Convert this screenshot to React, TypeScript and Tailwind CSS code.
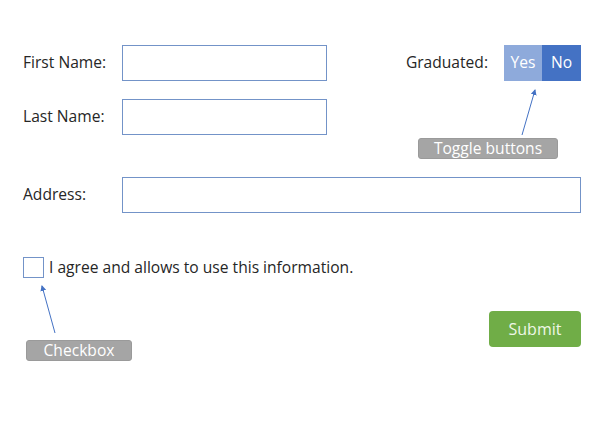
import React from 'react'

const FONT = { fontFamily: '"Open Sans", "Noto Sans", sans-serif' }

function Field({ label, wide }: { label: string; wide?: boolean }) {
  return (
    <div className={wide ? 'flex flex-1 items-center' : 'flex items-center'}>
      <label className="w-[99px] text-[15.6px] text-[#262626]">{label}</label>
      <input
        className={
          (wide ? 'flex-1 ' : 'w-[205px] ') +
          'h-[36px] border border-[#7393c8] bg-white outline-none'
        }
      />
    </div>
  )
}

function Callout({ text, className }: { text: string; className: string }) {
  return (
    <div
      className={
        'absolute flex h-[21px] items-center justify-center rounded-[3px] border border-[#9a9a9a] bg-[#a5a5a5] text-[15.6px] text-white ' +
        className
      }
    >
      {text}
    </div>
  )
}

export default function App() {
  return (
    <div className="relative h-[435px] w-[613px] bg-white pl-[23px] pr-[32px]" style={FONT}>
      <div className="pt-[45px]">
        <div className="flex items-center">
          <Field label="First Name:" />
          <div className="ml-auto flex items-center">
            <span className="mr-[16px] text-[15.6px] text-[#262626]">Graduated:</span>
            <div className="flex h-[36px]">
              <button className="w-[38px] bg-[#8eaadb] text-[15.6px] text-white">Yes</button>
              <button className="w-[39px] bg-[#4472c4] text-[15.6px] text-white">No</button>
            </div>
          </div>
        </div>
        <div className="mt-[18px] flex">
          <Field label="Last Name:" />
        </div>
        <div className="mt-[42px] flex">
          <Field label="Address:" wide />
        </div>
        <div className="mt-[43px] flex items-center">
          <input
            type="checkbox"
            className="h-[21px] w-[21px] appearance-none border border-[#7393c8] bg-white"
          />
          <span className="ml-[5px] text-[15.6px] text-[#262626]">
            I agree and allows to use this information.
          </span>
        </div>
        <div className="mt-[32px] flex justify-end">
          <button className="h-[36px] w-[92px] rounded-[4px] bg-[#70ad47] text-[16px] text-[#eef7e6]">
            Submit
          </button>
        </div>
      </div>

      <svg className="pointer-events-none absolute left-0 top-0" width="613" height="435">
        <defs>
          <marker id="ah" markerWidth="6" markerHeight="6" refX="5" refY="3" orient="auto">
            <path d="M0,0 L6,3 L0,6 z" fill="#4472c4" />
          </marker>
        </defs>
        <line x1="522" y1="135" x2="535" y2="90" stroke="#4472c4" strokeWidth="1" markerEnd="url(#ah)" />
        <line x1="55" y1="333" x2="42" y2="286" stroke="#4472c4" strokeWidth="1" markerEnd="url(#ah)" />
      </svg>

      <Callout text="Toggle buttons" className="left-[418px] top-[138px] w-[140px]" />
      <Callout text="Checkbox" className="left-[26px] top-[340px] w-[106px]" />
    </div>
  )
}
